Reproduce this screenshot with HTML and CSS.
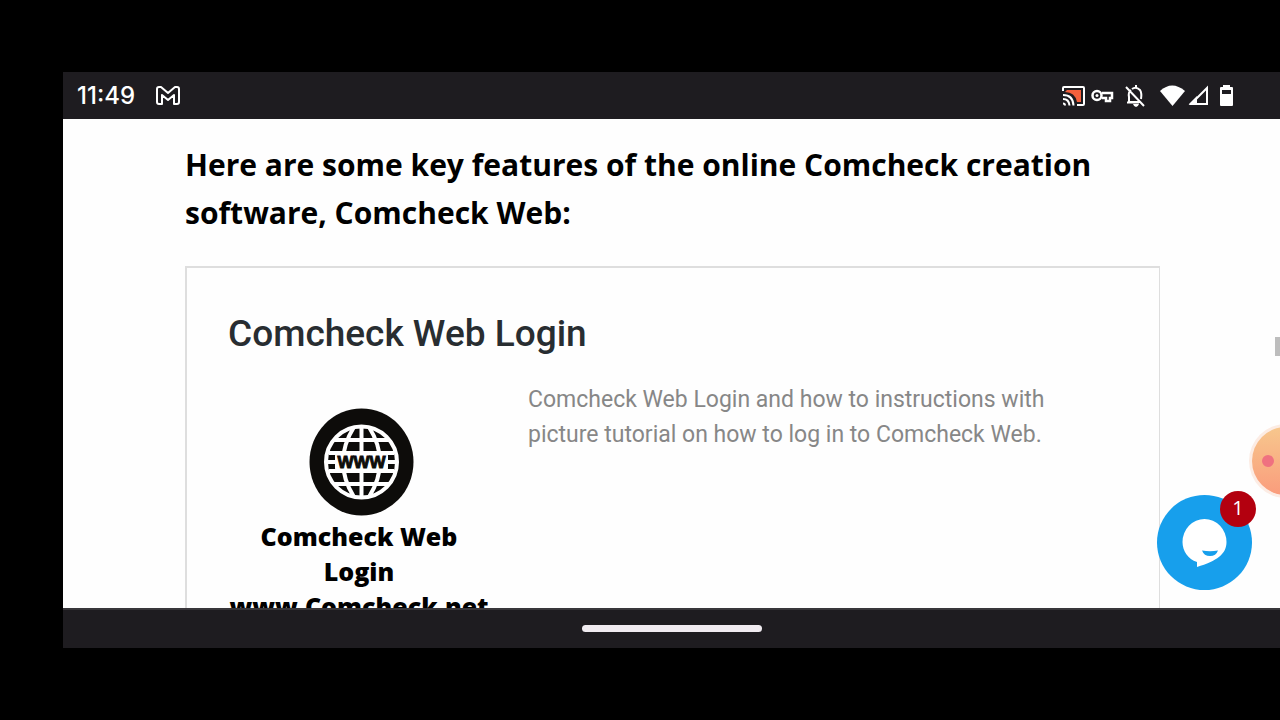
FILE: index.html
```html
<!DOCTYPE html>
<html lang="en">
<head>
<meta charset="utf-8">
<title>Comcheck Web</title>
<link rel="stylesheet" href="styles.css">
</head>
<body>
<div class="device">
  <header class="status">
    <span class="clock">11:49</span>
    <svg class="mail" width="26" height="20" viewBox="0 0 26 20" fill="none" stroke="#fff" stroke-width="2" stroke-linejoin="round"><path d="M2 16V3Q2 1 4 1H6L13 7L20 1H22Q24 1 24 3V16Q24 18 22 18H19V9L13 14L7 9V18H4Q2 18 2 16Z"/></svg>
    <svg class="tray" width="174" height="26" viewBox="0 0 174 26" fill="none" stroke="#fff" stroke-width="2">
      <path d="M7 7H21V19H17Q15 9 5 9Z" fill="#f4603c" stroke="none"/>
      <path d="M3 8V5Q3 4 4 4H23Q24 4 24 5V21Q24 22 23 22H17M3 20.500Q5 20.500 5 22.500M3 16Q9 16 9.500 22.500M3 12Q13 12 13.500 22.500"/>
      <circle cx="37" cy="12.500" r="4.500" stroke-width="2.500"/><circle cx="37" cy="12.500" r="1.500" fill="#fff" stroke="none"/>
      <path d="M42 10H52V15H50V18H46V15H42" stroke-width="2.500"/>
      <path d="M66 4L84 23M71 7Q68 9 69 14V19H80M67 19.500H79M72 6Q76 3 80 7Q82 10 81 16M76 2V5"/><path d="M73 21H79Q78 24 76 24T73 21Z" fill="#fff" stroke="none"/>
      <path d="M100 8Q112 -3 125 8L112.500 23Z" fill="#fff" stroke="none"/>
      <path d="M147 5V21H131Z"/><path d="M129 21L137 13V21Z" fill="#fff" stroke="none"/>
      <path fill="#fff" stroke="none" fill-rule="evenodd" d="M163 2H170V4H172Q173 4 173 5V22Q173 23 172 23H161Q160 23 160 22V5Q160 4 161 4H163ZM162 7V11H171V7Z"/>
    </svg>
  </header>
  <main class="page">
    <h1 class="lead">Here are some key features of the online Comcheck creation software, Comcheck Web:</h1>
    <article class="card">
      <h2 class="title">Comcheck Web Login</h2>
      <div class="row">
        <figure class="figure">
          <svg class="globe" width="110" height="108" viewBox="-4 0 110 108">
            <ellipse cx="53.500" cy="54" rx="52" ry="53.500" fill="#0d0c0a"/>
            <g fill="none" stroke="#fff" stroke-width="4"><circle cx="53.500" cy="54" r="35.500"/><path d="M46 19Q24 54 46 89M61 19Q83 54 61 89M53.500 18V90M26 32H81M21 45H86M21 63H86M26 76H81M17 54H90"/></g>
            <rect x="27" y="45" width="53" height="18" rx="3" fill="#fff"/>
            <text class="www" x="53.500" y="60" text-anchor="middle">WWW</text>
          </svg>
          <figcaption class="caption">Comcheck Web Login www.Comcheck.net</figcaption>
        </figure>
        <p class="text">Comcheck Web Login and how to instructions with picture tutorial on how to log in to Comcheck Web.</p>
      </div>
    </article>
    <span class="thumb"></span>
    <svg class="bubble" width="32" height="76" viewBox="0 0 32 76"><defs><linearGradient id="peach" x2="0" y2="1"><stop stop-color="#f7c78d"/><stop offset="1" stop-color="#fa9c7c"/></linearGradient></defs><circle cx="38" cy="38" r="37" fill="#fcece4"/><circle cx="38" cy="38" r="34" fill="url(#peach)"/><circle cx="20" cy="38" r="6" fill="#ef7180"/></svg>
    <button class="chat" aria-label="Open chat, 1 new message">
      <svg width="95" height="95" viewBox="0 0 95 95"><circle cx="47.500" cy="47.500" r="47.500" fill="#179fec"/><path d="M40 72V67C31 64 25.500 56 25.500 47A22 23 0 1 1 69.500 47C69.500 59 60 66 40 72Z" fill="#fff"/><path d="M45 55.500Q53 57 61 55.500Q59 61 53 61T45 55.500Z" fill="#179fec"/></svg>
      <span class="badge">1</span>
    </button>
  </main>
  <footer class="nav"><span class="pill"></span></footer>
</div>
</body>
</html>
```
FILE: styles.css
```css
* { box-sizing: border-box; }
body { margin: 0; background: #000; }
.device {
  display: flex;
  flex-direction: column;
  height: 100vh;
  padding: 72px 0 72px 63px;
}
.status {
  display: flex;
  align-items: center;
  flex: none;
  height: 47px;
  padding: 0 46px 0 14px;
  background: #1e1c20;
  color: #fff;
}
.clock { font: 500 24px/32px Inter, sans-serif; }
.mail { margin-left: 20px; }
.tray { margin-left: auto; }
.page {
  position: relative;
  flex: 1;
  min-height: 0;
  overflow: hidden;
  padding: 22px 120px 0 122px;
  background: #fefefe;
}
.lead {
  margin: 0 0 29px;
  font: 700 30px/48px "Open Sans", sans-serif;
  color: #000;
}
.card {
  min-height: 480px;
  padding: 42px 42px 40px 41px;
  border: 2px solid #dedede;
  border-right-width: 1px;
}
.title {
  margin: 0 0 22px;
  font: 500 37px/48px Roboto, sans-serif;
  color: #282d31;
}
.row { display: flex; gap: 38px; }
.figure {
  flex: none;
  width: 262px;
  margin: 0;
  padding-top: 28px;
  text-align: center;
}
.globe { display: block; margin: 0 auto 3px; }
.www {
  font: 700 17px "Liberation Sans", sans-serif;
  fill: #0d0c0a;
  stroke: #0d0c0a;
  stroke-width: 1px;
}
.caption { font: 800 25px/35px "Open Sans", sans-serif; color: #000; }
.text {
  flex: 1;
  max-width: 540px;
  margin: 2px 0 0;
  font: 400 23px/35px Roboto, sans-serif;
  color: #878787;
}
.thumb {
  position: absolute;
  right: 0;
  top: 218px;
  width: 5px;
  height: 19px;
  background: #bdbdbd;
}
.bubble { position: absolute; right: 0; top: 304px; }
.chat {
  position: absolute;
  right: 28px;
  bottom: 18px;
  padding: 0;
  border: 0;
  background: none;
}
.chat svg { display: block; }
.badge {
  position: absolute;
  top: -4px;
  right: -4px;
  width: 36px;
  height: 36px;
  border-radius: 50%;
  background: #b3000f;
  color: #fff;
  font: 400 20px/34px "Open Sans", sans-serif;
  text-align: center;
}
.nav {
  display: flex;
  flex: none;
  justify-content: center;
  height: 40px;
  padding-top: 15px;
  border-top: 2px solid #38363a;
  background: #1e1c20;
}
.pill {
  width: 180px;
  height: 7px;
  border-radius: 4px;
  background: #f0ebf0;
}
```
